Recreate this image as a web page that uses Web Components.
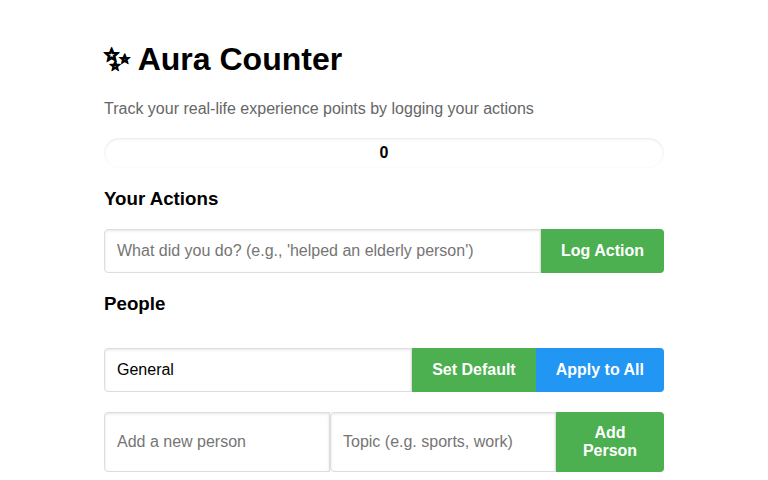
<!DOCTYPE html>
<html lang="en"><head><meta charset="utf-8"><title>Aura Counter</title>
<style>html,body{margin:0;background:#fff;font-family:"Liberation Sans",Arial,sans-serif}
aura-heading.a{margin-bottom:19px}aura-heading.p{margin-bottom:33px}</style></head>
<body>
<aura-app>
<aura-header icon="✨&#xFE0E;" title="Aura Counter" subtitle="Track your real-life experience points by logging your actions"></aura-header>
<aura-meter value="0"></aura-meter>
<aura-heading class="a">Your Actions</aura-heading>
<aura-row><aura-field placeholder="What did you do? (e.g., 'helped an elderly person')"></aura-field><aura-btn>Log Action</aura-btn></aura-row>
<aura-heading class="p">People</aura-heading>
<aura-row><aura-field value="General"></aura-field><aura-btn>Set Default</aura-btn><aura-btn color="blue">Apply to All</aura-btn></aura-row>
<aura-row><aura-field placeholder="Add a new person"></aura-field><aura-field placeholder="Topic (e.g. sports, work)"></aura-field><aura-btn>Add Person</aura-btn></aura-row>
</aura-app>
<script>
function def(name, html, init){
  customElements.define(name, class extends HTMLElement{
    connectedCallback(){
      if(this.shadowRoot) return;
      const r=this.attachShadow({mode:'open'});
      r.innerHTML=html;
      if(init) init(this,r);
    }
  });
}
def('aura-app',`<style>:host{display:block;box-sizing:border-box;width:600px;margin:0 auto;padding:20px 20px 0;color:#000}</style><slot></slot>`);
def('aura-header',`<style>:host{display:block}
h1{margin:21.44px 0;font-size:32px;line-height:37px;font-weight:700}
.i{font-variant-emoji:text;-webkit-text-stroke:.3px #000}
p{margin:0 0 20px;font-size:16px;line-height:18px;color:#666}</style><h1><span class="i"></span> <span class="n"></span></h1><p></p>`,(h,r)=>{
  r.querySelector('.i').textContent=h.getAttribute('icon');
  r.querySelector('.n').textContent=h.getAttribute('title');
  r.querySelector('p').textContent=h.getAttribute('subtitle');
});
def('aura-meter',`<style>:host{display:block;height:30px;position:relative;background:#fff;border-radius:15px;box-shadow:inset 0 1px 3px rgba(0,0,0,.1);overflow:hidden}
.t{display:flex;align-items:center;justify-content:center;height:100%;font-weight:700;font-size:16px}</style><div class="t"></div>`,(h,r)=>{r.querySelector('.t').textContent=h.getAttribute('value')});
def('aura-heading',`<style>:host{display:block;margin:20px 0 18px;font-size:18.72px;line-height:22px;font-weight:700}</style><slot></slot>`);
def('aura-row',`<style>:host{display:flex;margin-bottom:20px;align-items:stretch}:host(:last-child){margin-bottom:0}</style><slot></slot>`);
def('aura-field',`<style>:host{display:flex;flex:1 0 226px;min-width:0}
input{box-sizing:border-box;flex:1;min-width:0;width:100%;height:100%;padding:12px;font:16px/18px "Liberation Sans",Arial,sans-serif;color:#000;background:#fff;border:1px solid #ddd;border-radius:4px 0 0 4px;box-shadow:inset 0 1px 3px rgba(0,0,0,.1);outline:0}
input::placeholder{color:#757575}</style><input type="text">`,(h,r)=>{
  const i=r.querySelector('input');
  if(h.hasAttribute('placeholder')) i.placeholder=h.getAttribute('placeholder');
  if(h.hasAttribute('value')) i.setAttribute('value',h.getAttribute('value'));
});
def('aura-btn',`<style>:host{display:flex;flex:0 1 auto}
button{padding:12px 20px;border:0;background:#4caf50;color:#fff;font:700 16px/18px "Liberation Sans",Arial,sans-serif;width:100%}
:host([color=blue]) button{background:#2196f3}
:host(:last-child) button{border-radius:0 4px 4px 0}</style><button><slot></slot></button>`);
</script>
</body></html>
